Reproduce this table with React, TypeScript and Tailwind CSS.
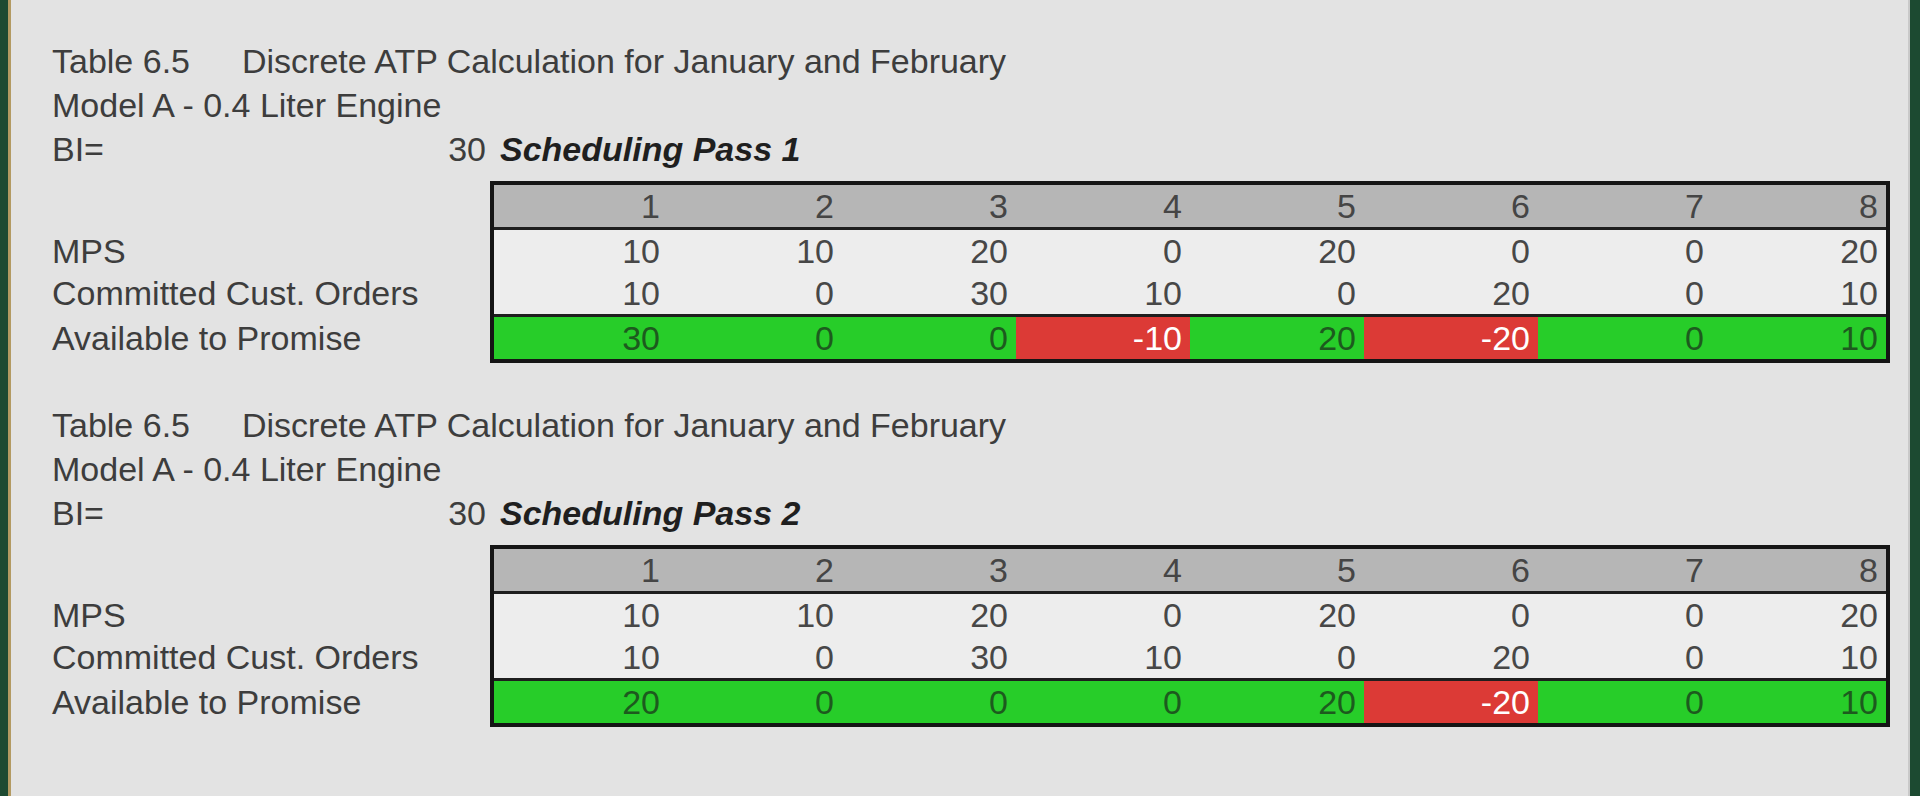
import React from 'react';

interface PassData {
  pass: number;
  mps: number[];
  orders: number[];
  atp: number[];
}

const PASSES: PassData[] = [
  {
    pass: 1,
    mps: [10, 10, 20, 0, 20, 0, 0, 20],
    orders: [10, 0, 30, 10, 0, 20, 0, 10],
    atp: [30, 0, 0, -10, 20, -20, 0, 10],
  },
  {
    pass: 2,
    mps: [10, 10, 20, 0, 20, 0, 0, 20],
    orders: [10, 0, 30, 10, 0, 20, 0, 10],
    atp: [20, 0, 0, 0, 20, -20, 0, 10],
  },
];

const PERIODS = [1, 2, 3, 4, 5, 6, 7, 8];

const AtpSection: React.FC<{ data: PassData }> = ({ data }) => {
  return (
    <section className="flex flex-col">
      <div className="flex h-[44px] items-center leading-[44px]">
        <span className="w-[190px]">Table 6.5</span>
        <span>Discrete ATP Calculation for January and February</span>
      </div>
      <div className="h-[44px] leading-[44px]">Model A - 0.4 Liter Engine</div>
      <div className="flex h-[44px] leading-[44px]">
        <span className="w-[438px] flex justify-between pr-[4px]">
          <span>BI=</span>
          <span>30</span>
        </span>
        <span className="pl-[10px] font-bold italic text-[#1f1f1f]">Scheduling Pass {data.pass}</span>
      </div>

      <div className="flex mt-[10px]">
        {/* row labels */}
        <div className="w-[438px] flex flex-col pt-[49px]">
          <div className="h-[42px] leading-[42px]">MPS</div>
          <div className="h-[42px] leading-[42px]">Committed Cust. Orders</div>
          <div className="h-[42px] leading-[42px] mt-[3px]">Available to Promise</div>
        </div>

        <div className="w-[1400px] border-[4px] border-[#151515] flex flex-col">
          <div className="grid grid-cols-8 bg-[#b6b6b6] border-b-[3px] border-[#1e1e1e]">
            {PERIODS.map((p) => (
              <div key={p} className="h-[42px] leading-[42px] text-right pr-[8px] text-[#454545]">
                {p}
              </div>
            ))}
          </div>
          <div className="grid grid-cols-8 bg-[#ededed]">
            {data.mps.map((v, i) => (
              <div key={i} className="h-[42px] leading-[42px] text-right pr-[8px] text-[#474747]">
                {v}
              </div>
            ))}
          </div>
          <div className="grid grid-cols-8 bg-[#ededed]">
            {data.orders.map((v, i) => (
              <div key={i} className="h-[42px] leading-[42px] text-right pr-[8px] text-[#474747]">
                {v}
              </div>
            ))}
          </div>
          <div className="grid grid-cols-8 border-t-[3px] border-[#1e1e1e]">
            {data.atp.map((v, i) =>
              v < 0 ? (
                <div key={i} className="h-[42px] leading-[42px] text-right pr-[8px] bg-[#dc3a36] text-white">
                  {v}
                </div>
              ) : (
                <div key={i} className="h-[42px] leading-[42px] text-right pr-[8px] bg-[#27cd29] text-[#1d5a1e]">
                  {v}
                </div>
              )
            )}
          </div>
        </div>
      </div>
    </section>
  );
};

export default function App() {
  return (
    <div className="flex h-[796px] w-[1920px] overflow-hidden bg-[#e3e3e3] text-[34px] text-[#3d3d3d] font-['Liberation_Sans',Arial,sans-serif]">
      <div className="w-[8px] bg-[#1d4a31]" />
      <div className="w-[3px] bg-[#b39a62]" />
      <main className="flex-1 flex flex-col gap-[40px] pl-[41px] pt-[39px]">
        {PASSES.map((p) => (
          <AtpSection key={p.pass} data={p} />
        ))}
      </main>
      <div className="w-[2px] bg-[#c9c9c9]" />
      <div className="w-[10px] bg-[#1c4a31]" />
    </div>
  );
}
